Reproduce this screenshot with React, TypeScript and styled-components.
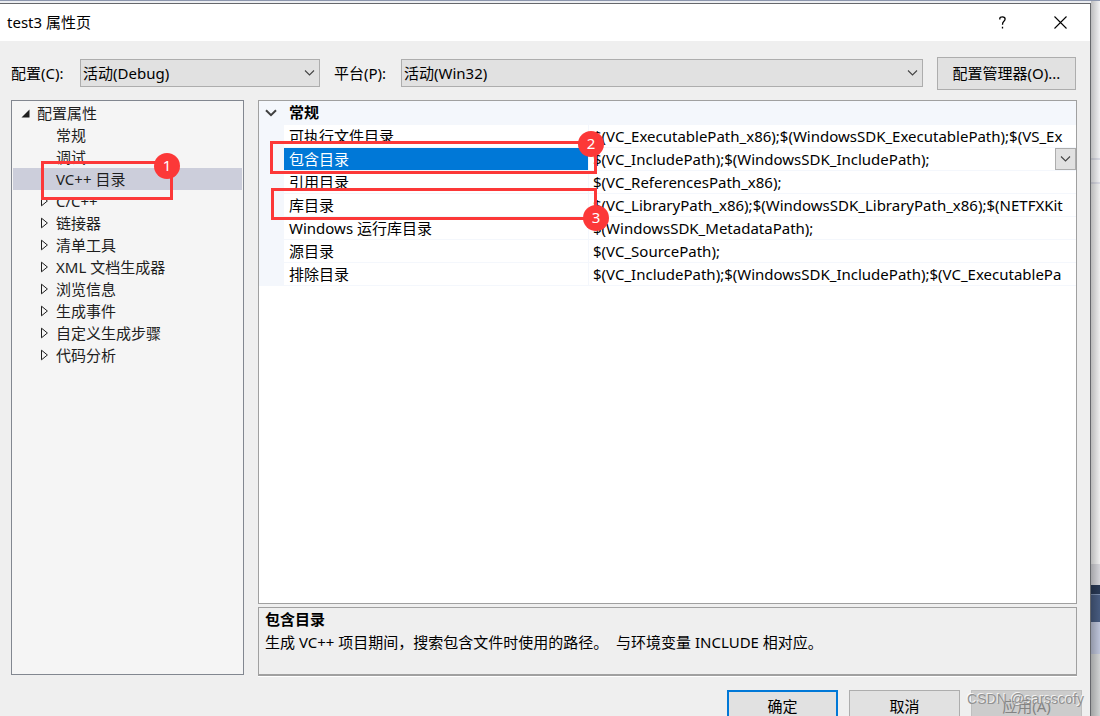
import React from "react";
import styled, { createGlobalStyle, css } from "styled-components";

const GlobalStyle = createGlobalStyle`
  *, *::before, *::after { box-sizing: border-box; }
  html, body { margin: 0; padding: 0; overflow: hidden; }
  body, button, select {
    font-family: "Noto Sans", "Noto Sans CJK SC", sans-serif;
    font-size: 15px;
    color: #000;
  }
`;

const Screen = styled.div`
  display: flex;
  height: 100vh;
  overflow: hidden;
  background: #eceef2;
  border-top: 1px solid #8d97ae;
`;

const Dialog = styled.main`
  position: relative;
  flex: 1;
  min-width: 0;
  display: flex;
  flex-direction: column;
  margin-top: 2px;
  background: #efefef;
  border-top: 1px solid #66686c;
  border-right: 1px solid #66686c;
`;

const Backdrop = styled.div`
  flex: 0 0 9px;
  display: flex;
  flex-direction: column;
`;

const Strip = styled.div<{ $color: string; $height?: number }>`
  ${(p) => (p.$height ? css`flex: 0 0 ${p.$height}px;` : css`flex: 1;`)}
  background: linear-gradient(to right, rgba(0, 0, 0, 0.22), transparent) ${(p) => p.$color};
`;

const TitleBar = styled.header`
  flex: 0 0 37px;
  display: flex;
  align-items: center;
  padding-left: 7px;
  background: #fff;
`;

const Title = styled.h1`
  flex: 1;
  margin: 0;
  font-size: 15px;
  font-weight: 400;
  line-height: 36px;
  height: 37px;
`;

const TitleButton = styled.button`
  display: flex;
  align-items: center;
  justify-content: center;
  width: 57px;
  height: 36px;
  padding: 0;
  border: 0;
  background: transparent;
`;

const CloseButton = styled(TitleButton)`
  width: 59px;
`;

const Toolbar = styled.div`
  display: flex;
  align-items: center;
  padding: 16px 14px 10px 11px;
`;

const FieldLabel = styled.label<{ $width: number }>`
  flex: 0 0 ${(p) => p.$width}px;
  padding-bottom: 2px;
  white-space: nowrap;
`;

const SelectWrap = styled.div<{ $width?: number }>`
  position: relative;
  ${(p) => (p.$width ? css`flex: 0 0 ${p.$width}px;` : css`flex: 1;`)}
  margin: 0 14px 1px 0;

  svg {
    position: absolute;
    top: 10px;
    right: 5px;
    pointer-events: none;
  }
`;

const Select = styled.select`
  display: block;
  width: 100%;
  height: 28px;
  padding: 0 24px 0 2px;
  appearance: none;
  border: 1px solid #adadad;
  border-radius: 0;
  background: #e1e1e1;
`;

const Button = styled.button<{ $width: number; $primary?: boolean }>`
  flex: 0 0 ${(p) => p.$width}px;
  height: 33px;
  padding: 0 0 3px;
  border: ${(p) => (p.$primary ? "2px solid #0078d7" : "1px solid #adadad")};
  background: #e1e1e1;
  white-space: nowrap;

  &:disabled {
    border-color: #bfbfbf;
    background: #ccc;
    color: #838383;
  }
`;

const Body = styled.div`
  flex: 1;
  min-height: 0;
  display: flex;
  gap: 14px;
  padding: 0 13px 0 11px;
`;

const Tree = styled.ul`
  flex: 0 0 233px;
  margin: 0 0 1px;
  padding: 1px;
  list-style: none;
  border: 1px solid #828790;
  background: #f5f5f5;
`;

const TreeItem = styled.li<{ $level: number; $selected?: boolean }>`
  position: relative;
  display: flex;
  align-items: center;
  height: 22px;
  padding-left: ${(p) => (p.$level ? 27 : 8)}px;
  background: ${(p) => (p.$selected ? "#cccedb" : "transparent")};
  color: #1e1e1e;
  line-height: 22px;
  white-space: nowrap;
`;

const ArrowSlot = styled.span`
  flex: 0 0 16px;
  display: flex;
`;

const Detail = styled.div`
  flex: 1;
  min-width: 0;
  display: flex;
  flex-direction: column;
  gap: 3px;
`;

const GridPanel = styled.section`
  flex: 1;
  min-height: 0;
  overflow: hidden;
  border: 1px solid #a0a0a0;
  background: #fff;
`;

const PropertyTable = styled.table`
  width: 100%;
  table-layout: fixed;
  border-collapse: separate;
  border-spacing: 0;
  line-height: 22px;
  text-align: left;
`;

const GutterCol = styled.col`
  width: 25px;
`;

const NameCol = styled.col`
  width: 305px;
`;

const Gutter = styled.td`
  padding: 0;
  background: #f4f7fc;
`;

const GroupGutter = styled(Gutter)`
  height: 24px;
  padding-left: 6px;

  svg { display: block; }
`;

const GroupHead = styled.th`
  padding: 0 5px 2px;
  background: #f4f7fc;
  font-weight: 700;
`;

const NameCell = styled.th<{ $selected?: boolean }>`
  position: relative;
  height: 23px;
  padding: 0 5px;
  border-right: 1px solid #f4f7fc;
  border-bottom: 1px solid #f4f7fc;
  background: ${(p) => (p.$selected ? "#0078d7" : "#fff")};
  background-clip: padding-box;
  color: ${(p) => (p.$selected ? "#fff" : "#000")};
  font-weight: 400;
  white-space: nowrap;
`;

const ValueCell = styled.td`
  height: 23px;
  padding: 0 0 0 4px;
  border-bottom: 1px solid #f4f7fc;
`;

const ValueContent = styled.div`
  display: flex;
  height: 22px;
`;

const ValueText = styled.span`
  flex: 1;
  min-width: 0;
  overflow: hidden;
  white-space: nowrap;
`;

const DropButton = styled.button`
  flex: 0 0 21px;
  display: flex;
  align-items: center;
  justify-content: center;
  height: 22px;
  padding: 0;
  border: 1px solid #adadad;
  background: #e1e1e1;
`;

const Description = styled.section`
  flex: 0 0 69px;
  padding: 0 6px;
  border: 1px solid #a0a0a0;
  border-bottom-width: 2px;
  box-shadow: 0 1px 0 #fff;
  line-height: 23px;
`;

const DescriptionTitle = styled.h2`
  margin: 0;
  font-size: 15px;
  font-weight: 700;
`;

const DescriptionText = styled.p`
  margin: 0;
  white-space: pre;
`;

const Footer = styled.footer`
  flex: 0 0 40px;
  min-height: 0;
  display: flex;
  justify-content: flex-end;
  align-items: flex-start;
  gap: 11px;
  padding: 14px 8px 0 0;
`;

const Mark = styled.span<{ $top: number; $left: number; $width: number; $height: number }>`
  position: absolute;
  z-index: 2;
  top: ${(p) => p.$top}px;
  left: ${(p) => p.$left}px;
  width: ${(p) => p.$width}px;
  height: ${(p) => p.$height}px;
  border: 3px solid #fc3838;
  pointer-events: none;
`;

const Badge = styled.span<{ $top: number; $right: number }>`
  position: absolute;
  top: ${(p) => p.$top}px;
  right: ${(p) => p.$right}px;
  width: 26px;
  height: 26px;
  border-radius: 50%;
  background: #fc3838;
  color: #fff;
  line-height: 24px;
  text-align: center;
`;

const Watermark = styled.span`
  position: absolute;
  right: 6px;
  bottom: 8px;
  color: #929292;
  font-family: "Liberation Sans", sans-serif;
  font-size: 14px;
  line-height: 18px;
  text-shadow: -1px -1px 0 rgba(255, 255, 255, 0.8);
  pointer-events: none;
`;

const Chevron = () => (
  <svg width="11" height="8" viewBox="0 0 11 8" fill="none" stroke="#444" strokeWidth="1.1">
    <path d="M1 1.5 5.5 6 10 1.5" />
  </svg>
);

const GroupChevron = () => (
  <svg width="12" height="8" viewBox="0 0 12 8" fill="none" stroke="#404040" strokeWidth="2">
    <path d="M1 1.2 6 6.2 11 1.2" />
  </svg>
);

const ExpandedArrow = () => (
  <svg width="9" height="9" viewBox="0 0 9 9">
    <path d="M8.5 0.5V8.5H0.5Z" fill="#1e1e1e" />
  </svg>
);

const CollapsedArrow = () => (
  <svg width="9" height="12" viewBox="0 0 9 12" fill="none" stroke="#1e1e1e">
    <path d="M1.5 1.2V10.8L7.4 6Z" />
  </svg>
);

const CloseIcon = () => (
  <svg width="13" height="13" viewBox="0 0 13 13" stroke="#000" strokeWidth="1.1">
    <path d="M0.5 0.5 12.5 12.5M12.5 0.5 0.5 12.5" />
  </svg>
);

const HelpIcon = () => (
  <svg width="7" height="13" viewBox="0 0 7 13" fill="none" stroke="#000" strokeWidth="1.3">
    <path d="M0.8 3.6V2.6Q0.8 0.8 3.4 0.8Q6.1 0.8 6.1 3Q6.1 4.3 4.7 5.5Q3.5 6.5 3.5 8.8M3.5 10.8V12.4" />
  </svg>
);

type Marker = {
  label: string;
  top: number;
  left: number;
  width: number;
  height: number;
  badgeTop: number;
  badgeRight: number;
};

const Annotation = ({ mark }: { mark: Marker }) => (
  <Mark $top={mark.top} $left={mark.left} $width={mark.width} $height={mark.height}>
    <Badge $top={mark.badgeTop} $right={mark.badgeRight}>{mark.label}</Badge>
  </Mark>
);

const treeItems: { text: string; level: number; arrow?: "open" | "closed"; mark?: Marker }[] = [
  { text: "配置属性", level: 0, arrow: "open" },
  { text: "常规", level: 1 },
  { text: "调试", level: 1 },
  {
    text: "VC++ 目录",
    level: 1,
    mark: { label: "1", top: -7, left: 28, width: 132, height: 39, badgeTop: -11, badgeRight: -10 },
  },
  { text: "C/C++", level: 1, arrow: "closed" },
  { text: "链接器", level: 1, arrow: "closed" },
  { text: "清单工具", level: 1, arrow: "closed" },
  { text: "XML 文档生成器", level: 1, arrow: "closed" },
  { text: "浏览信息", level: 1, arrow: "closed" },
  { text: "生成事件", level: 1, arrow: "closed" },
  { text: "自定义生成步骤", level: 1, arrow: "closed" },
  { text: "代码分析", level: 1, arrow: "closed" },
];

const properties: { name: string; value: string; selected?: boolean; mark?: Marker }[] = [
  { name: "可执行文件目录", value: "$(VC_ExecutablePath_x86);$(WindowsSDK_ExecutablePath);$(VS_Ex" },
  {
    name: "包含目录",
    value: "$(VC_IncludePath);$(WindowsSDK_IncludePath);",
    selected: true,
    mark: { label: "2", top: -7, left: -14, width: 327, height: 33, badgeTop: -13, badgeRight: -10 },
  },
  { name: "引用目录", value: "$(VC_ReferencesPath_x86);" },
  {
    name: "库目录",
    value: "$(VC_LibraryPath_x86);$(WindowsSDK_LibraryPath_x86);$(NETFXKit",
    mark: { label: "3", top: -6, left: -13, width: 326, height: 32, badgeTop: 14, badgeRight: -15 },
  },
  { name: "Windows 运行库目录", value: "$(WindowsSDK_MetadataPath);" },
  { name: "源目录", value: "$(VC_SourcePath);" },
  { name: "排除目录", value: "$(VC_IncludePath);$(WindowsSDK_IncludePath);$(VC_ExecutablePa" },
];

export default function App() {
  return (
    <>
      <GlobalStyle />
      <Screen>
        <Dialog>
          <TitleBar>
            <Title>test3 属性页</Title>
            <TitleButton aria-label="帮助"><HelpIcon /></TitleButton>
            <CloseButton aria-label="关闭"><CloseIcon /></CloseButton>
          </TitleBar>

          <Toolbar>
            <FieldLabel htmlFor="configuration" $width={69}>配置(C):</FieldLabel>
            <SelectWrap $width={240}>
              <Select id="configuration"><option>活动(Debug)</option></Select>
              <Chevron />
            </SelectWrap>
            <FieldLabel htmlFor="platform" $width={67}>平台(P):</FieldLabel>
            <SelectWrap>
              <Select id="platform"><option>活动(Win32)</option></Select>
              <Chevron />
            </SelectWrap>
            <Button $width={139}>配置管理器(O)...</Button>
          </Toolbar>

          <Body>
            <Tree>
              {treeItems.map((item) => (
                <TreeItem key={item.text} $level={item.level} $selected={!!item.mark}>
                  <ArrowSlot>
                    {item.arrow === "open" && <ExpandedArrow />}
                    {item.arrow === "closed" && <CollapsedArrow />}
                  </ArrowSlot>
                  {item.text}
                  {item.mark && <Annotation mark={item.mark} />}
                </TreeItem>
              ))}
            </Tree>

            <Detail>
              <GridPanel>
                <PropertyTable>
                  <colgroup>
                    <GutterCol />
                    <NameCol />
                    <col />
                  </colgroup>
                  <tbody>
                    <tr>
                      <GroupGutter><GroupChevron /></GroupGutter>
                      <GroupHead colSpan={2}>常规</GroupHead>
                    </tr>
                    {properties.map((row) => (
                      <tr key={row.name}>
                        <Gutter />
                        <NameCell scope="row" $selected={row.selected}>
                          {row.name}
                          {row.mark && <Annotation mark={row.mark} />}
                        </NameCell>
                        <ValueCell>
                          <ValueContent>
                            <ValueText>{row.value}</ValueText>
                            {row.selected && <DropButton aria-label="编辑"><Chevron /></DropButton>}
                          </ValueContent>
                        </ValueCell>
                      </tr>
                    ))}
                  </tbody>
                </PropertyTable>
              </GridPanel>
              <Description>
                <DescriptionTitle>包含目录</DescriptionTitle>
                <DescriptionText>{"生成 VC++ 项目期间，搜索包含文件时使用的路径。  与环境变量 INCLUDE 相对应。"}</DescriptionText>
              </Description>
            </Detail>
          </Body>

          <Footer>
            <Button $width={111} $primary>确定</Button>
            <Button $width={111}>取消</Button>
            <Button $width={111} disabled>应用(A)</Button>
          </Footer>
          <Watermark>CSDN @sarsscofy</Watermark>
        </Dialog>

        <Backdrop>
          <Strip $height={157} $color="#f1f1f3" />
          <Strip $height={2} $color="#d9dae4" />
          <Strip $height={22} $color="#f1f1f3" />
          <Strip $height={2} $color="#d9dae4" />
          <Strip $height={380} $color="#eeeeee" />
          <Strip $height={21} $color="#d3d3d8" />
          <Strip $height={9} $color="#293955" />
          <Strip $height={1} $color="#7a8cab" />
          <Strip $height={27} $color="#475b7f" />
          <Strip $height={32} $color="#bcc3d8" />
          <Strip $color="#d0d2d2" />
        </Backdrop>
      </Screen>
    </>
  );
}
